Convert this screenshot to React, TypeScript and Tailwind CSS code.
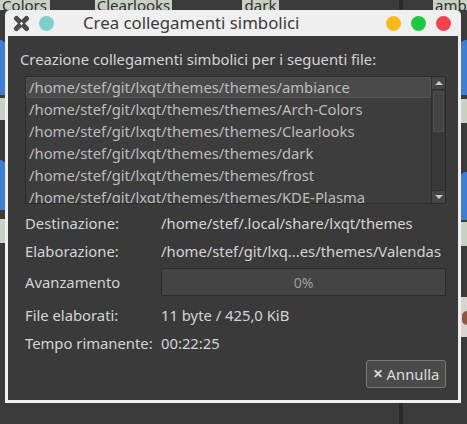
import React from 'react';

const font = { fontFamily: '"Noto Sans", "Open Sans", sans-serif' };

const files = [
  '/home/stef/git/lxqt/themes/themes/ambiance',
  '/home/stef/git/lxqt/themes/themes/Arch-Colors',
  '/home/stef/git/lxqt/themes/themes/Clearlooks',
  '/home/stef/git/lxqt/themes/themes/dark',
  '/home/stef/git/lxqt/themes/themes/frost',
  '/home/stef/git/lxqt/themes/themes/KDE-Plasma',
];

// desktop behind the dialog: only slivers of it show
const Desktop = () => (
  <div className="absolute inset-0 bg-[#3b3b3b]">
    <div className="flex h-[10px] text-[15px] leading-[10px] text-[#2e2e2e] overflow-hidden">
      <div className="w-[50px] bg-[#c9d0c4] flex items-end justify-end pr-[3px] overflow-hidden">Colors</div>
      <div className="w-[45px]" />
      <div className="w-[77px] bg-[#c9d0c4] flex items-end justify-center overflow-hidden">Clearlooks</div>
      <div className="w-[70px]" />
      <div className="w-[37px] bg-[#c9d0c4] flex items-end justify-center overflow-hidden">dark</div>
      <div className="w-[120px]" />
      <div className="w-[4px] bg-[#2a2a2a]" />
      <div className="w-[30px]" />
      <div className="flex-1 bg-[#c9d0c4] pl-[2px] flex items-end overflow-hidden">amb</div>
    </div>
    {/* left slivers */}
    <div className="absolute left-0 top-[40px] w-[6px] h-[55px] bg-[#3f7ed0] rounded-tr-[6px]" />
    <div className="absolute left-0 top-[98px] w-[6px] h-[22px] bg-[#c9d0c4]" />
    <div className="absolute left-0 top-[160px] w-[6px] h-[50px] bg-[#3f7ed0] rounded-tr-[6px]" />
    <div className="absolute left-0 top-[219px] w-[6px] h-[24px] bg-[#c9d0c4]" />
    {/* right slivers */}
    <div className="absolute right-0 top-[40px] w-[7px] h-[55px] bg-[#3f7ed0] rounded-tl-[6px]" />
    <div className="absolute right-0 top-[99px] w-[7px] h-[24px] bg-[#c9d0c4]" />
    <div className="absolute right-0 top-[172px] w-[7px] h-[48px] bg-[#3f7ed0] rounded-tl-[6px]" />
    <div className="absolute right-0 top-[222px] w-[7px] h-[24px] bg-[#c9d0c4]" />
    <div className="absolute right-0 top-[297px] w-[7px] h-[40px] bg-[#d8d4d0]">
      <div className="mt-[14px] ml-[2px] w-[5px] h-[14px] bg-[#8a5a44] rounded-l-full" />
    </div>
    <div className="absolute left-[399px] top-[400px] w-[4px] h-[24px] bg-[#2a2a2a]" />
  </div>
);

const Dot = ({ color }: { color: string }) => (
  <div className={`w-[15px] h-[15px] rounded-full ${color}`} />
);

const Row = ({ label, children }: { label: string; children: React.ReactNode }) => (
  <div className="flex items-center h-[28px]">
    <div className="w-[136px] shrink-0">{label}</div>
    <div className="flex-1 min-w-0 whitespace-nowrap">{children}</div>
  </div>
);

export default function App() {
  return (
    <div className="relative w-[467px] h-[424px] overflow-hidden" style={font}>
      <Desktop />

      <div className="absolute left-[5px] top-[10px] w-[456px] flex flex-col">
        {/* title bar */}
        <div className="h-[26px] bg-[#efefef] rounded-t-[5px] flex items-center px-[8px]">
          <svg width="17" height="17" viewBox="0 0 17 17">
            <path d="M3.5 3.5 L13.5 13.5 M13.5 3.5 L3.5 13.5" stroke="#4a4a4a" strokeWidth="5" strokeLinecap="round" />
            <path d="M8.5 6.8 L10.2 8.5 L8.5 10.2 L6.8 8.5 Z" fill="#efefef" />
          </svg>
          <div className="ml-[9px]"><Dot color="bg-[#7dd0c7]" /></div>
          <div className="ml-[29px] text-[16.8px] text-[#3a3a3a]">Crea collegamenti simbolici</div>
          <div className="ml-auto flex gap-[10px] mr-[2px]">
            <Dot color="bg-[#fbb81b]" />
            <Dot color="bg-[#1fc841]" />
            <Dot color="bg-[#f1434f]" />
          </div>
        </div>

        {/* body */}
        <div className="bg-[#3a3a3a] border-x-[3px] border-b-[3px] border-[#f0f0f0] px-[12px] pt-[13px] pb-[12px] text-[14.8px] text-[#d4d4d4]">
          <div className="h-[21px] leading-[21px]">Creazione collegamenti simbolici per i seguenti file:</div>

          <div className="mt-[6px] ml-[5px] h-[128px] border border-[#2c2c2c] bg-[#3d3d3d] flex">
            <div className="flex-1 min-w-0 overflow-hidden flex flex-col text-[#bcbcbc]">
              {files.map((f, i) => (
                <div
                  key={f}
                  className={`shrink-0 whitespace-nowrap ${
                    i === 0
                      ? 'bg-[#4a4a4a] border border-[#555] rounded-[2px] h-[21px] leading-[19px] pl-[2px] mb-[1px]'
                      : 'h-[22px] leading-[21px] pl-[3px]'
                  }`}
                >
                  {f}
                </div>
              ))}
            </div>
            <div className="w-[14px] shrink-0 border-l border-[#2e2e2e] bg-[#383838] flex flex-col">
              <div className="h-[13px] bg-[#464646] border-b border-[#2e2e2e] flex items-center justify-center">
                <div className="w-0 h-0 border-x-[4px] border-x-transparent border-b-[4px] border-b-[#c8c8c8]" />
              </div>
              <div className="h-[41px] mx-[1px] mt-[1px] bg-[#444] border border-[#4e4e4e] rounded-[1px]" />
              <div className="flex-1" />
              <div className="h-[13px] bg-[#464646] border-t border-[#2e2e2e] flex items-center justify-center">
                <div className="w-0 h-0 border-x-[4px] border-x-transparent border-t-[4px] border-t-[#c8c8c8]" />
              </div>
            </div>
          </div>

          <div className="ml-[5px] mt-[5px] flex flex-col">
            <Row label="Destinazione:">/home/stef/.local/share/lxqt/themes</Row>
            <Row label="Elaborazione:">/home/stef/git/lxq...es/themes/Valendas</Row>
            <div className="flex items-center h-[28px] mt-[3px]">
              <div className="w-[136px] shrink-0">Avanzamento</div>
              <div className="flex-1 h-[28px] bg-[#444444] border border-[#2b2b2b] rounded-[2px] flex items-center justify-center text-[#9c9c9c] text-[14px]">
                0%
              </div>
            </div>
            <div className="h-[5px]" />
            <Row label="File elaborati:">11 byte / 425,0 KiB</Row>
            <Row label="Tempo rimanente:">00:22:25</Row>
            <div className="flex justify-end mt-[3px]">
              <button className="h-[28px] w-[80px] bg-[#4a4a4a] border border-[#7a7a7a] rounded-[3px] flex items-center justify-center gap-[4px] text-[#dcdcdc] text-[14.8px]">
                <span className="font-bold text-[12px]">✕</span>
                <span>Annulla</span>
              </button>
            </div>
          </div>
        </div>
      </div>
    </div>
  );
}
